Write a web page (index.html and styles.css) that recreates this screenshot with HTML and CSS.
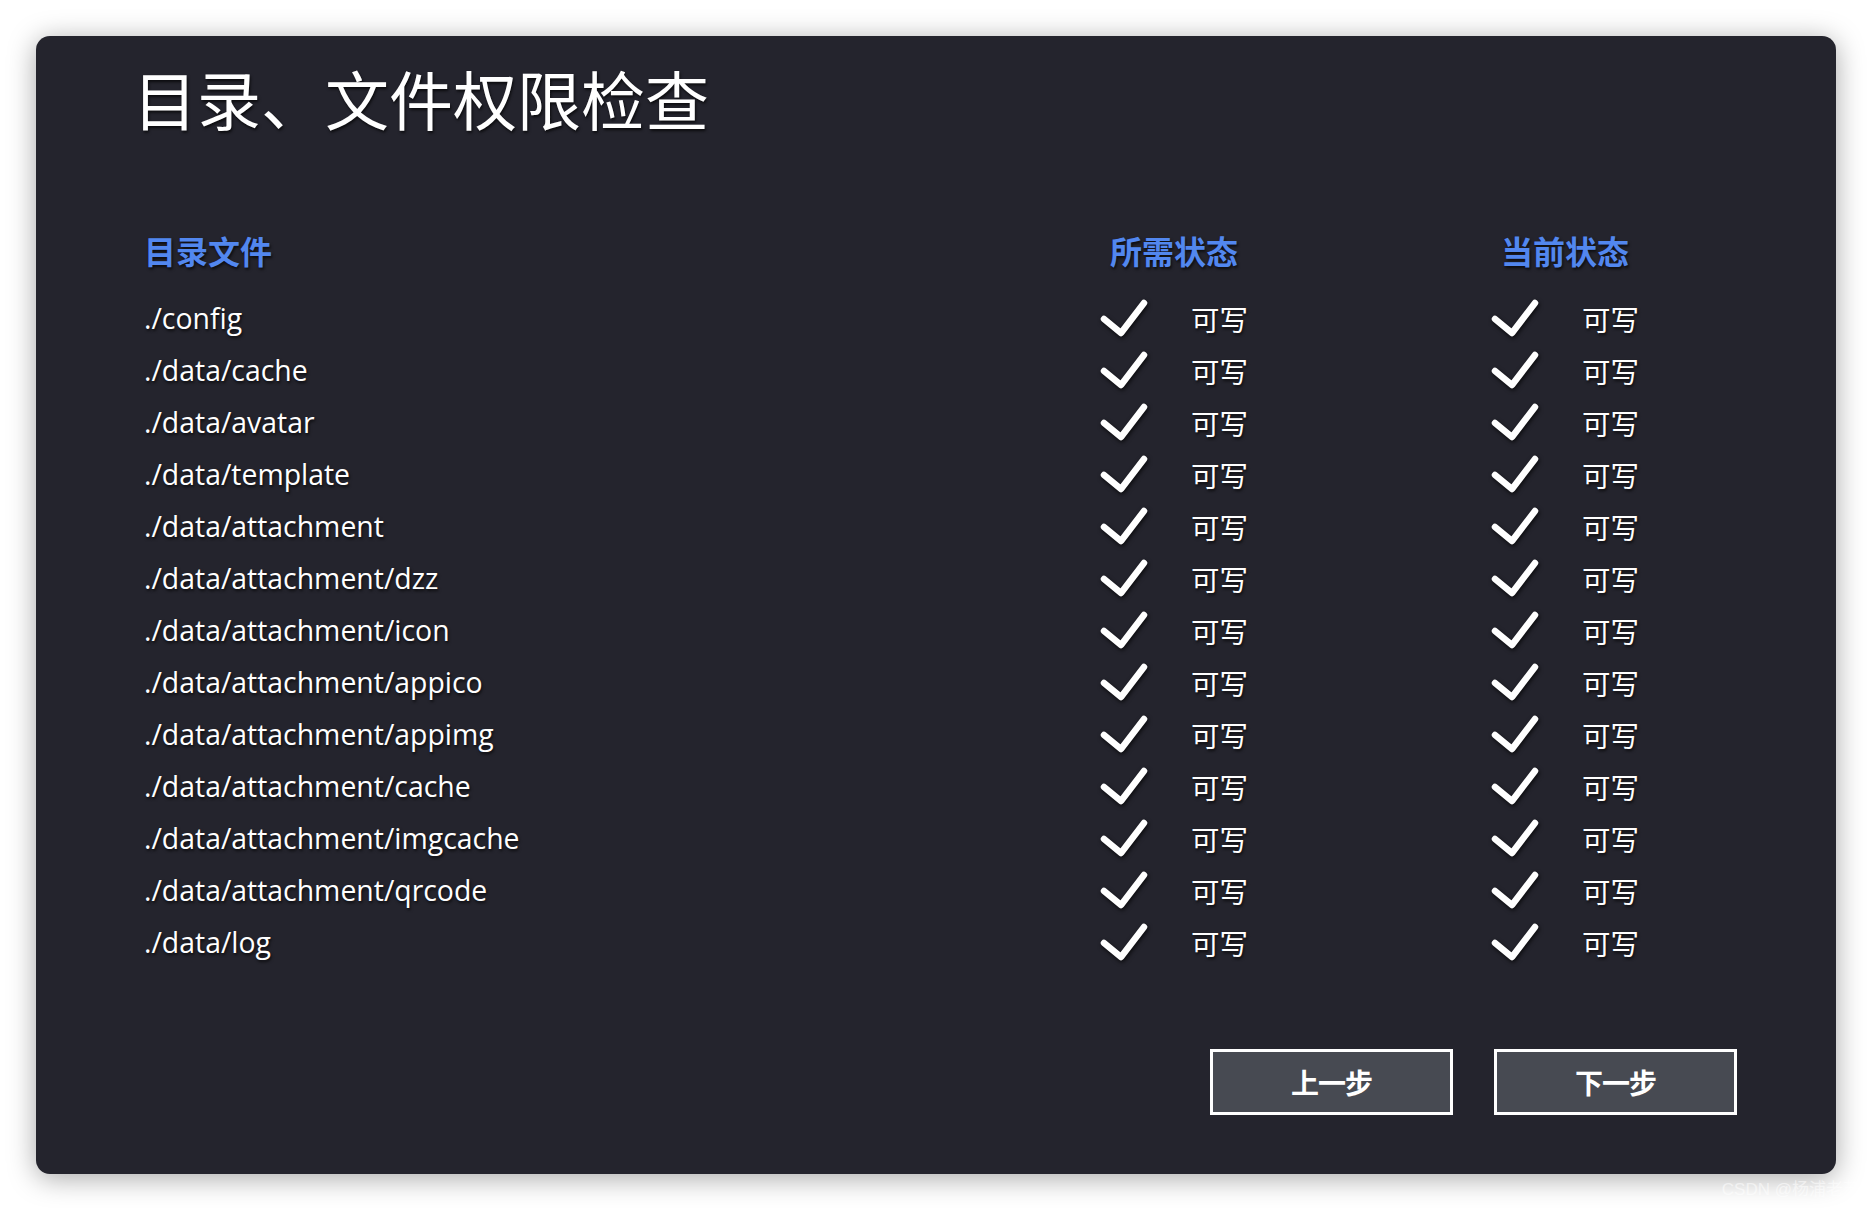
FILE: index.html
```html
<!DOCTYPE html>
<html lang="zh-CN">
<head>
<meta charset="utf-8">
<title>目录、文件权限检查</title>
<link rel="stylesheet" href="styles.css">
</head>
<body>
<div class="card">
  <h1 class="title">目录、文件权限检查</h1>
  <div class="table">
    <div class="row head">
      <div class="c-path">目录文件</div>
      <div class="c-st"><span class="hd">所需状态</span></div>
      <div class="c-st"><span class="hd">当前状态</span></div>
    </div>
    <div class="row"><div class="c-path">./config</div><div class="c-st"><svg class="chk" viewBox="0 0 48 40"><polyline points="4,21 21,35 44,5"/></svg><span class="txt">可写</span></div><div class="c-st"><svg class="chk" viewBox="0 0 48 40"><polyline points="4,21 21,35 44,5"/></svg><span class="txt">可写</span></div></div>
    <div class="row"><div class="c-path">./data/cache</div><div class="c-st"><svg class="chk" viewBox="0 0 48 40"><polyline points="4,21 21,35 44,5"/></svg><span class="txt">可写</span></div><div class="c-st"><svg class="chk" viewBox="0 0 48 40"><polyline points="4,21 21,35 44,5"/></svg><span class="txt">可写</span></div></div>
    <div class="row"><div class="c-path">./data/avatar</div><div class="c-st"><svg class="chk" viewBox="0 0 48 40"><polyline points="4,21 21,35 44,5"/></svg><span class="txt">可写</span></div><div class="c-st"><svg class="chk" viewBox="0 0 48 40"><polyline points="4,21 21,35 44,5"/></svg><span class="txt">可写</span></div></div>
    <div class="row"><div class="c-path">./data/template</div><div class="c-st"><svg class="chk" viewBox="0 0 48 40"><polyline points="4,21 21,35 44,5"/></svg><span class="txt">可写</span></div><div class="c-st"><svg class="chk" viewBox="0 0 48 40"><polyline points="4,21 21,35 44,5"/></svg><span class="txt">可写</span></div></div>
    <div class="row"><div class="c-path">./data/attachment</div><div class="c-st"><svg class="chk" viewBox="0 0 48 40"><polyline points="4,21 21,35 44,5"/></svg><span class="txt">可写</span></div><div class="c-st"><svg class="chk" viewBox="0 0 48 40"><polyline points="4,21 21,35 44,5"/></svg><span class="txt">可写</span></div></div>
    <div class="row"><div class="c-path">./data/attachment/dzz</div><div class="c-st"><svg class="chk" viewBox="0 0 48 40"><polyline points="4,21 21,35 44,5"/></svg><span class="txt">可写</span></div><div class="c-st"><svg class="chk" viewBox="0 0 48 40"><polyline points="4,21 21,35 44,5"/></svg><span class="txt">可写</span></div></div>
    <div class="row"><div class="c-path">./data/attachment/icon</div><div class="c-st"><svg class="chk" viewBox="0 0 48 40"><polyline points="4,21 21,35 44,5"/></svg><span class="txt">可写</span></div><div class="c-st"><svg class="chk" viewBox="0 0 48 40"><polyline points="4,21 21,35 44,5"/></svg><span class="txt">可写</span></div></div>
    <div class="row"><div class="c-path">./data/attachment/appico</div><div class="c-st"><svg class="chk" viewBox="0 0 48 40"><polyline points="4,21 21,35 44,5"/></svg><span class="txt">可写</span></div><div class="c-st"><svg class="chk" viewBox="0 0 48 40"><polyline points="4,21 21,35 44,5"/></svg><span class="txt">可写</span></div></div>
    <div class="row"><div class="c-path">./data/attachment/appimg</div><div class="c-st"><svg class="chk" viewBox="0 0 48 40"><polyline points="4,21 21,35 44,5"/></svg><span class="txt">可写</span></div><div class="c-st"><svg class="chk" viewBox="0 0 48 40"><polyline points="4,21 21,35 44,5"/></svg><span class="txt">可写</span></div></div>
    <div class="row"><div class="c-path">./data/attachment/cache</div><div class="c-st"><svg class="chk" viewBox="0 0 48 40"><polyline points="4,21 21,35 44,5"/></svg><span class="txt">可写</span></div><div class="c-st"><svg class="chk" viewBox="0 0 48 40"><polyline points="4,21 21,35 44,5"/></svg><span class="txt">可写</span></div></div>
    <div class="row"><div class="c-path">./data/attachment/imgcache</div><div class="c-st"><svg class="chk" viewBox="0 0 48 40"><polyline points="4,21 21,35 44,5"/></svg><span class="txt">可写</span></div><div class="c-st"><svg class="chk" viewBox="0 0 48 40"><polyline points="4,21 21,35 44,5"/></svg><span class="txt">可写</span></div></div>
    <div class="row"><div class="c-path">./data/attachment/qrcode</div><div class="c-st"><svg class="chk" viewBox="0 0 48 40"><polyline points="4,21 21,35 44,5"/></svg><span class="txt">可写</span></div><div class="c-st"><svg class="chk" viewBox="0 0 48 40"><polyline points="4,21 21,35 44,5"/></svg><span class="txt">可写</span></div></div>
    <div class="row"><div class="c-path">./data/log</div><div class="c-st"><svg class="chk" viewBox="0 0 48 40"><polyline points="4,21 21,35 44,5"/></svg><span class="txt">可写</span></div><div class="c-st"><svg class="chk" viewBox="0 0 48 40"><polyline points="4,21 21,35 44,5"/></svg><span class="txt">可写</span></div></div>
  </div>
  <div class="actions">
    <button class="btn">上一步</button>
    <button class="btn">下一步</button>
  </div>
</div>
<div class="watermark">CSDN @杨浦老苏</div>
</body>
</html>
```
FILE: styles.css
```css
html, body {
  margin: 0;
  padding: 0;
  background: #ffffff;
}
body {
  width: 1872px;
  height: 1208px;
  overflow: hidden;
  position: relative;
  font-family: "Noto Sans CJK SC", "Noto Sans", sans-serif;
}
.card {
  margin: 36px 0 0 36px;
  width: 1800px;
  height: 1138px;
  box-sizing: border-box;
  background: #24242d;
  border-radius: 14px;
  box-shadow: 0 4px 28px rgba(0, 0, 0, 0.35);
  padding-top: 1px;
  color: #ffffff;
}
.title {
  margin: 20px 0 0 97px;
  font-size: 64px;
  line-height: 80px;
  font-weight: 400;
  letter-spacing: 0;
  text-shadow: 1px 2px 3px rgba(0, 0, 0, 0.7);
}
.table {
  margin-top: 87px;
  padding-left: 108px;
}
.row {
  display: grid;
  grid-template-columns: 956px 391px 1fr;
  height: 52px;
  align-items: center;
}
.row.head {
  margin-bottom: 16px;
}
.c-path {
  font-family: "Open Sans", "Noto Sans CJK SC", sans-serif;
  font-size: 28.4px;
  letter-spacing: 0;
  text-shadow: 1px 2px 3px rgba(0, 0, 0, 0.7);
}
.head .c-path, .hd {
  font-family: "Noto Sans CJK SC", sans-serif;
  font-size: 32px;
  font-weight: 700;
  color: #5287ef;
  text-shadow: 1px 2px 3px rgba(0, 0, 0, 0.7);
  letter-spacing: 0;
}
.hd {
  padding-left: 10px;
}
.c-st {
  display: flex;
  align-items: center;
}
.chk {
  width: 48px;
  height: 40px;
  fill: none;
  stroke: #ffffff;
  stroke-width: 6.5;
  stroke-linecap: round;
  stroke-linejoin: round;
  filter: drop-shadow(1px 2px 2px rgba(0, 0, 0, 0.7));
}
.txt {
  margin-left: 43px;
  font-size: 28.5px;
  line-height: 1;
  margin-top: 3px;
  text-shadow: 1px 2px 3px rgba(0, 0, 0, 0.7);
}
.actions {
  display: flex;
  justify-content: flex-end;
  gap: 41px;
  margin-top: 81px;
  padding-right: 99px;
}
.btn {
  width: 243px;
  height: 66px;
  box-sizing: border-box;
  background: #474a52;
  border: 3px solid #ffffff;
  color: #ffffff;
  font-family: "Noto Sans CJK SC", sans-serif;
  font-size: 28px;
  font-weight: 700;
  letter-spacing: -1px;
  padding: 0;
}
.watermark {
  position: absolute;
  right: 12px;
  bottom: 8px;
  font-family: "Liberation Sans", "Noto Sans CJK SC", sans-serif;
  font-size: 17px;
  color: rgba(255, 255, 255, 0.55);
}
```
